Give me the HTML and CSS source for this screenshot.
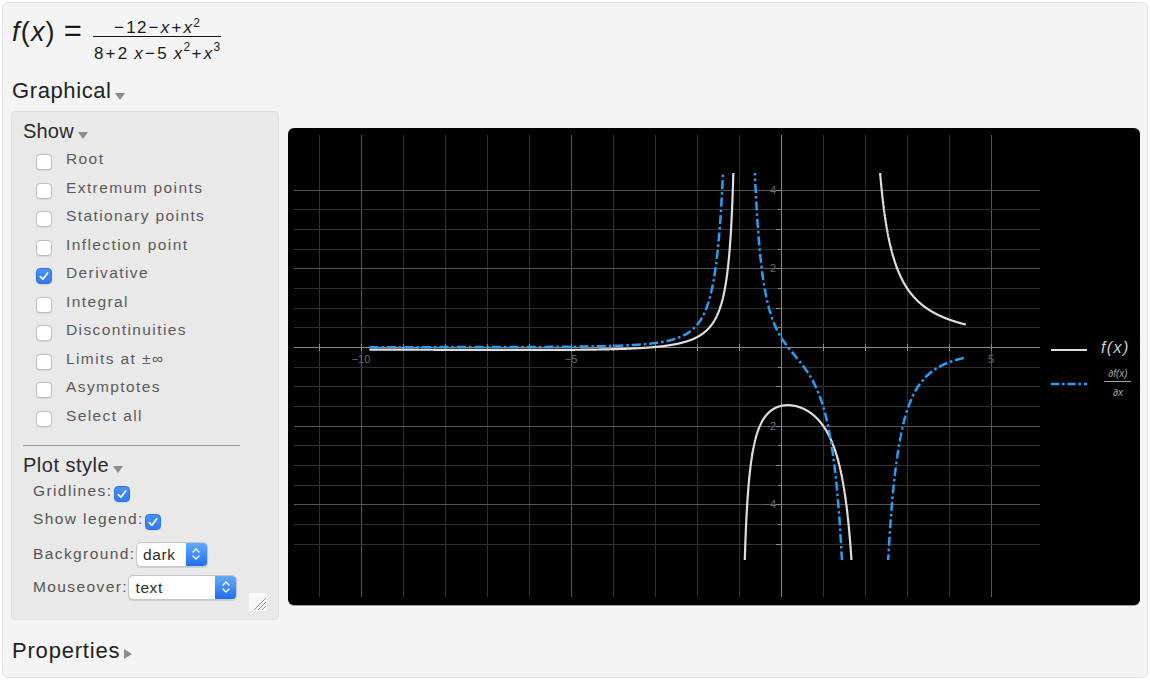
FILE: index.html
```html
<!DOCTYPE html>
<html lang="en">
<head>
<meta charset="utf-8">
<title>f(x) plot</title>
<link rel="stylesheet" href="styles.css">
</head>
<body>
<div class="page">
  <div class="formula">
    <span class="fx"><i>f</i>(<i>x</i>)</span>
    <span class="eq">=</span>
    <span class="frac">
      <span class="num"><span class="op">−</span>12<span class="op">−</span><i>x</i><span class="op">+</span><i>x</i><sup>2</sup></span>
      <span class="den">8<span class="op">+</span>2 <i>x</i><span class="op">−</span>5 <i>x</i><sup>2</sup><span class="op">+</span><i>x</i><sup>3</sup></span>
    </span>
  </div>

  <div class="section-title">Graphical<span class="tri-down"></span></div>

  <div class="content">
    <div class="panel">
      <div class="panel-title">Show<span class="tri-down small"></span></div>
      <div class="checks">
        <div class="check-row"><span class="cb"></span><span class="check-label">Root</span></div>
        <div class="check-row"><span class="cb"></span><span class="check-label">Extremum points</span></div>
        <div class="check-row"><span class="cb"></span><span class="check-label">Stationary points</span></div>
        <div class="check-row"><span class="cb"></span><span class="check-label">Inflection point</span></div>
        <div class="check-row"><span class="cb on"><svg viewBox="0 0 16 16" width="16" height="16"><path d="M4.3 8.6 L6.9 11.2 L11.6 5" /></svg></span><span class="check-label">Derivative</span></div>
        <div class="check-row"><span class="cb"></span><span class="check-label">Integral</span></div>
        <div class="check-row"><span class="cb"></span><span class="check-label">Discontinuities</span></div>
        <div class="check-row"><span class="cb"></span><span class="check-label">Limits at ±∞</span></div>
        <div class="check-row"><span class="cb"></span><span class="check-label">Asymptotes</span></div>
        <div class="check-row"><span class="cb"></span><span class="check-label">Select all</span></div>
      </div>
      <div class="separator"></div>
      <div class="panel-title plot-title">Plot style<span class="tri-down small"></span></div>
      <div class="style-rows">
        <div class="style-row"><span class="lbl">Gridlines:</span><span class="cb on"><svg viewBox="0 0 16 16" width="16" height="16"><path d="M4.3 8.6 L6.9 11.2 L11.6 5" /></svg></span></div>
        <div class="style-row"><span class="lbl">Show legend:</span><span class="cb on"><svg viewBox="0 0 16 16" width="16" height="16"><path d="M4.3 8.6 L6.9 11.2 L11.6 5" /></svg></span></div>
        <div class="style-row sel-row first"><span class="lbl">Background:</span>
          <span class="select sel-dark"><span class="sel-text">dark</span><span class="sel-btn"><svg viewBox="0 0 10 14" width="10" height="14"><path d="M2 5 L5 2 L8 5 M2 9 L5 12 L8 9"/></svg></span></span>
        </div>
        <div class="style-row sel-row"><span class="lbl">Mouseover:</span>
          <span class="select sel-text-w"><span class="sel-text">text</span><span class="sel-btn"><svg viewBox="0 0 10 14" width="10" height="14"><path d="M2 5 L5 2 L8 5 M2 9 L5 12 L8 9"/></svg></span></span>
        </div>
      </div>
      <span class="grip"><svg viewBox="0 0 18 18" width="18" height="18"><path d="M5 17 L17 5 M9 17 L17 9 M13 17 L17 13"/></svg></span>
    </div>

    <div class="plot">
      <svg class="plot-svg" viewBox="0 0 852 477" width="852" height="477">
        <defs>
          <clipPath id="clipY"><rect x="0" y="45" width="852" height="387"/></clipPath>
        </defs>
        <g id="grid"></g>
        <g id="axes"></g>
        <g class="tick-labels">
          <text x="73" y="235" text-anchor="middle">−10</text>
          <text x="283" y="235" text-anchor="middle">−5</text>
          <text x="703" y="235" text-anchor="middle">5</text>
          <text x="488" y="65.8" text-anchor="end">4</text>
          <text x="488" y="144.4" text-anchor="end">2</text>
          <text x="488" y="301.6" text-anchor="end">−2</text>
          <text x="488" y="380.2" text-anchor="end">−4</text>
        </g>
        <g clip-path="url(#clipY)">
          <path id="curve-f" class="curve-f" d=""/>
          <path id="curve-df" class="curve-df" d=""/>
        </g>
        <g class="legend">
          <line class="lg-f" x1="763" y1="222" x2="799" y2="222"/>
          <text class="lg-fx" x="813" y="225">f(x)</text>
          <line class="lg-df" x1="763" y1="256" x2="799" y2="256"/>
          <text class="lg-frac" x="830" y="249">∂f(x)</text>
          <line class="lg-bar" x1="816" y1="253.5" x2="843" y2="253.5"/>
          <text class="lg-frac" x="830" y="268">∂x</text>
        </g>
      </svg>
    </div>
  </div>

  <div class="section-title props">Properties<span class="tri-right"></span></div>
</div>
<script src="script.js"></script>
</body>
</html>
```

FILE: styles.css
```css
* { box-sizing: border-box; }
html, body { margin: 0; padding: 0; background: #ffffff; }
body { font-family: "Liberation Sans", Arial, sans-serif; color: #222; }

.page {
  margin: 2px;
  height: 676px;
  border: 1px solid #e6e6e6;
  border-radius: 6px;
  background: #f4f4f4;
  padding: 0 7px 0 8px;
}

/* formula */
.formula { display: flex; align-items: flex-start; height: 62px; margin-top: 13px; padding-left: 1px; color: #1a1a1a; }
.fx { font-size: 27px; line-height: 30px; letter-spacing: 1.2px; margin-top: 1px; }
.fx i, .frac i { font-style: italic; }
.eq { font-size: 31px; line-height: 30px; margin: 0 0 0 8px; }
.frac { display: inline-flex; flex-direction: column; align-items: center; margin: 3px 0 0 11px; font-size: 17px; letter-spacing: 1.2px; }
.num { line-height: 17px; padding: 0 2px; }
.den { line-height: 20px; border-top: 1px solid #1a1a1a; padding: 7px 0 0 1px; }
.op { margin: 0 1px; }
.frac sup { font-size: 12px; line-height: 0; vertical-align: 6px; letter-spacing: 0.5px; }
.den sup { vertical-align: 8px; }

/* section titles */
.section-title { font-size: 22px; line-height: 26px; letter-spacing: 0.6px; color: #222; padding-left: 1px; }
.section-title.props { margin-top: 18px; letter-spacing: 0.8px; }
.tri-down {
  display: inline-block;
  width: 0; height: 0;
  margin-left: 3px;
  vertical-align: -2px;
  border-left: 5.5px solid transparent;
  border-right: 5.5px solid transparent;
  border-top: 7px solid #8c8c8c;
}
.tri-down.small { margin-left: 4px; vertical-align: -1px; border-left-width: 5px; border-right-width: 5px; border-top-width: 7px; }
.tri-right {
  display: inline-block;
  width: 0; height: 0;
  margin-left: 4px;
  vertical-align: -1px;
  border-top: 5px solid transparent;
  border-bottom: 5px solid transparent;
  border-left: 8px solid #8c8c8c;
}

/* content row */
.content { display: flex; align-items: flex-start; gap: 9px; margin-top: 7px; }

.panel {
  position: relative;
  flex: none;
  width: 268px;
  height: 509px;
  background: #e9e9e9;
  border: 1px solid #e0e0e0;
  border-radius: 4px;
  padding-top: 7px;
}
.panel-title { font-size: 20px; line-height: 24px; color: #2a2a2a; padding-left: 11px; letter-spacing: 0.2px; }
.plot-title { margin-top: 7.5px; letter-spacing: 0.5px; }

.checks { margin-top: 2px; padding-left: 24px; }
.check-row { display: flex; align-items: flex-start; height: 28.56px; }
.check-label { margin-left: 14px; font-size: 15.5px; line-height: 28.56px; letter-spacing: 1.4px; color: #5a5a5a; white-space: nowrap; }

.cb {
  flex: none;
  width: 16px; height: 16px;
  margin-top: 9px;
  border-radius: 4px;
  background: #ffffff;
  border: 1px solid #bfbfbf;
  box-shadow: 0 0.5px 1px rgba(0,0,0,0.08);
}
.cb.on { background: linear-gradient(#4a92f8, #2f7bf3); border-color: #2b74e8; }
.cb svg { display: block; margin: -1px; }
.cb svg path { fill: none; stroke: #ffffff; stroke-width: 1.7; stroke-linecap: round; stroke-linejoin: round; }

.separator { width: 217px; height: 1px; background: #9a9a9a; margin: 14.5px 0 0 11px; }

.style-rows { padding-left: 21px; }
.style-row { display: flex; align-items: flex-start; height: 28px; }
.style-row .lbl { font-size: 15.5px; line-height: 28px; letter-spacing: 1.4px; color: #555; white-space: nowrap; }
.style-row .cb { margin: 9px 0 0 1.5px; }
.style-row.sel-row { height: 33px; align-items: center; }
.style-row.sel-row .lbl { line-height: 33px; }
.style-row.first { margin-top: 3.6px; }

.select {
  display: inline-flex;
  height: 25px;
  margin: 1px 0 0 0.5px;
  border: 1px solid #c7c7c7;
  border-radius: 5px;
  background: #ffffff;
  box-shadow: 0 1px 1px rgba(0,0,0,0.12);
  overflow: hidden;
}
.sel-dark { width: 72px; }
.sel-text-w { width: 109px; }
.sel-text { flex: 1; padding-left: 6px; font-size: 15.5px; line-height: 23px; letter-spacing: 0.6px; color: #2b2b2b; }
.sel-btn { width: 21px; flex: none; display: flex; align-items: center; justify-content: center; background: linear-gradient(#64aafc, #1f6ff1); }
.sel-btn svg path { fill: none; stroke: #ffffff; stroke-width: 1.4; stroke-linecap: round; stroke-linejoin: round; }

.grip { position: absolute; right: 11px; bottom: 8px; width: 18px; height: 18px; background: #f8f8f8; }
.grip svg { display: block; }
.grip svg path { stroke: #8a8a8a; stroke-width: 0.9; fill: none; }

/* plot */
.plot {
  flex: none;
  width: 852px;
  height: 477px;
  margin-top: 17px;
  background: #000000;
  border-radius: 6px;
  overflow: hidden;
  box-shadow: 0 1px 0 rgba(0,0,0,0.35);
}
.plot-svg { display: block; }
.grid-minor { stroke: #303030; stroke-width: 1; }
.grid-major { stroke: #555555; stroke-width: 1; }
.axis { stroke: #8a8a8a; stroke-width: 1; }
.tick { stroke: #8a8a8a; stroke-width: 1; }
.tick-labels text { fill: #6c6c6c; font-family: "Liberation Sans", Arial, sans-serif; font-size: 11px; }
.curve-f { fill: none; stroke: #dedede; stroke-width: 2.2; stroke-linejoin: round; }
.curve-df { fill: none; stroke: #2c9ef2; stroke-width: 2.5; stroke-dasharray: 9 3 2.5 3; }
.lg-f { stroke: #dedede; stroke-width: 2.2; }
.lg-df { stroke: #2c9ef2; stroke-width: 2.5; stroke-dasharray: 8 3 2.5 3; }
.lg-fx { fill: #d0d0d0; font-family: "Liberation Sans", Arial, sans-serif; font-size: 16px; font-style: italic; letter-spacing: 1.4px; }
.lg-frac { fill: #a6a6a6; font-family: "Liberation Sans", Arial, sans-serif; font-size: 10px; font-style: italic; text-anchor: middle; }
.lg-bar { stroke: #a6a6a6; stroke-width: 1; }
```

FILE: script.js
```js
(function () {
  var NS = 'http://www.w3.org/2000/svg';
  var X0 = 493, Y0 = 219, SX = 42, SY = 39.3;
  function px(x) { return X0 + SX * x; }
  function py(y) { return Y0 - SY * y; }
  function add(parent, x1, y1, x2, y2, cls) {
    var l = document.createElementNS(NS, 'line');
    l.setAttribute('x1', x1);
    l.setAttribute('y1', y1);
    l.setAttribute('x2', x2);
    l.setAttribute('y2', y2);
    l.setAttribute('class', cls);
    parent.appendChild(l);
  }
  var grid = document.getElementById('grid');
  var axes = document.getElementById('axes');
  var k, j, yy;
  for (k = -11; k <= 5; k++) {
    if (k === 0) continue;
    add(grid, px(k) + 0.5, 7, px(k) + 0.5, 469, (k % 5 === 0) ? 'grid-major' : 'grid-minor');
  }
  for (j = -10; j <= 8; j++) {
    if (j === 0) continue;
    yy = Math.round(py(j / 2)) + 0.5;
    add(grid, 6, yy, 752, yy, (j % 4 === 0) ? 'grid-major' : 'grid-minor');
  }
  add(axes, 6, Y0 + 0.5, 752, Y0 + 0.5, 'axis');
  add(axes, X0 + 0.5, 7, X0 + 0.5, 469, 'axis');
  for (k = -11; k <= 5; k++) {
    if (k === 0) continue;
    add(axes, px(k) + 0.5, Y0 - 3, px(k) + 0.5, Y0 + 4, 'tick');
  }
  for (j = -10; j <= 8; j++) {
    if (j === 0) continue;
    yy = Math.round(py(j / 2)) + 0.5;
    add(axes, X0 - (j % 2 === 0 ? 5 : 3), yy, X0 + 0.5, yy, 'tick');
  }

  function f(x) { return (x + 3) / ((x + 1) * (x - 2)); }
  function df(x) { var d = x * x - x - 2; return (-x * x - 6 * x + 1) / (d * d); }
  function build(fn, segs) {
    var d = '';
    for (var s = 0; s < segs.length; s++) {
      var a = segs[s][0], b = segs[s][1], n = 3000, pen = false;
      for (var i = 0; i <= n; i++) {
        var x = a + (b - a) * i / n;
        var v = fn(x);
        if (!isFinite(v) || Math.abs(v) > 14) { pen = false; continue; }
        d += (pen ? 'L' : 'M') + px(x).toFixed(2) + ',' + py(v).toFixed(2);
        pen = true;
      }
    }
    return d;
  }
  var segs = [[-9.8, -1], [-1, 2], [2, 4.4]];
  document.getElementById('curve-f').setAttribute('d', build(f, segs));
  document.getElementById('curve-df').setAttribute('d', build(df, segs));
})();
```
